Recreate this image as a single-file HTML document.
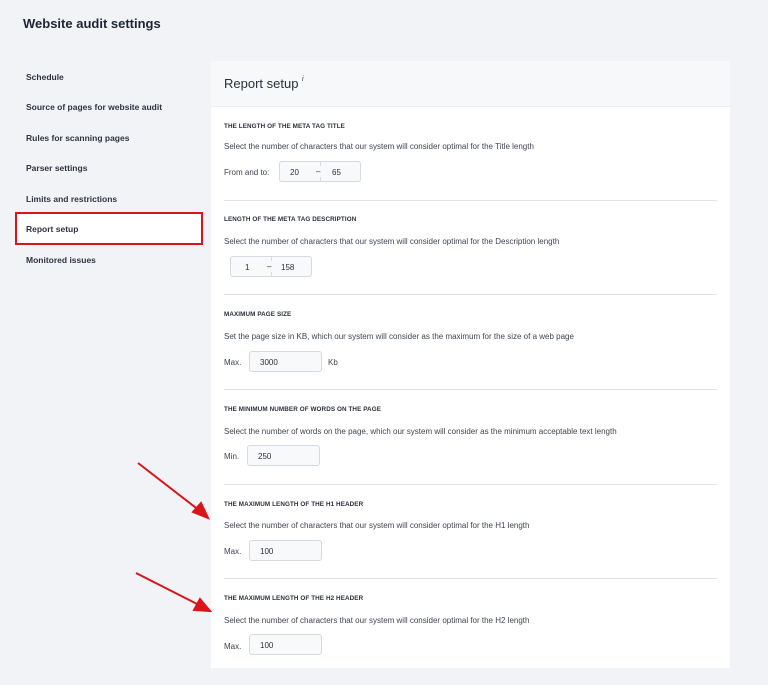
<!DOCTYPE html>
<html><head><meta charset="utf-8"><style>
*{box-sizing:border-box;margin:0;padding:0}
body{width:768px;height:685px;background:#f2f3f7;font-family:"Liberation Sans",sans-serif;color:#2b2f3a;position:relative;overflow:hidden}
.t{position:absolute;left:23px;top:16px;font-size:13px;font-weight:bold;color:#1f2430}
.nav{position:absolute;left:26px;font-size:8.5px;font-weight:bold;color:#2e3340}
.red{position:absolute;left:15px;top:212px;width:188px;height:33px;border:2px solid #d9141a;background:#fff}
.card{position:absolute;left:211px;top:61px;width:519px;height:607px;background:#fff}
.hd{height:46px;background:#f7f8fa;border-bottom:1px solid #eceef2;padding:15px 0 0 13px;font-size:13px;color:#2b2f3a}
.hd i{font-size:7px;vertical-align:top}
.s{position:absolute;left:13px;right:0}
.h{font-size:6.3px;font-weight:bold;letter-spacing:.1px;color:#2b2f3a}
.d{position:absolute;font-size:8px;color:#3f4550;white-space:nowrap}
.l{position:absolute;font-size:8px;color:#3f4550}
.in{position:absolute;height:21px;border:1px solid #d5d9e0;border-radius:3px;background:#f8f9fb;font-size:8px;color:#2b2f3a;padding:6px 0 0 10px}
.tick{position:absolute;left:40px;height:4px;border-left:1px solid #d5d9e0}
.line{position:absolute;left:0;width:493px;border-top:1px solid #dfe2e7}
</style></head><body>
<div class="t">Website audit settings</div>
<div class="red"></div>
<div class="nav" style="top:72px">Schedule</div>
<div class="nav" style="top:102px">Source of pages for website audit</div>
<div class="nav" style="top:133px">Rules for scanning pages</div>
<div class="nav" style="top:163px">Parser settings</div>
<div class="nav" style="top:194px">Limits and restrictions</div>
<div class="nav" style="top:224px">Report setup</div>
<div class="nav" style="top:255px">Monitored issues</div>
<div class="card">
<div class="hd">Report setup <i>i</i></div>
<div class="s" style="top:62px"><div class="h">THE LENGTH OF THE META TAG TITLE</div><div class="d" style="top:19px">Select the number of characters that our system will consider optimal for the Title length</div>
<div class="l" style="top:45px">From and to:</div>
<div class="in" style="left:55px;top:38px;width:82px">20<span class="tick" style="top:0"></span><span class="tick" style="bottom:0"></span><span style="position:absolute;left:36px;top:5px">–</span><span style="position:absolute;left:52px;top:6px">65</span></div>
<div class="line" style="top:77px"></div></div>
<div class="s" style="top:155px"><div class="h">LENGTH OF THE META TAG DESCRIPTION</div><div class="d" style="top:21px">Select the number of characters that our system will consider optimal for the Description length</div>
<div class="in" style="left:6px;top:40px;width:82px;padding-left:14px">1<span class="tick" style="top:0"></span><span class="tick" style="bottom:0"></span><span style="position:absolute;left:36px;top:5px">–</span><span style="position:absolute;left:50px;top:6px">158</span></div>
<div class="line" style="top:78px"></div></div>
<div class="s" style="top:250px"><div class="h">MAXIMUM PAGE SIZE</div><div class="d" style="top:21px">Set the page size in KB, which our system will consider as the maximum for the size of a web page</div>
<div class="l" style="top:47px">Max.</div><div class="in" style="left:25px;top:40px;width:73px">3000</div><div class="l" style="left:104px;top:47px">Kb</div>
<div class="line" style="top:78px"></div></div>
<div class="s" style="top:345px"><div class="h">THE MINIMUM NUMBER OF WORDS ON THE PAGE</div><div class="d" style="top:21px">Select the number of words on the page, which our system will consider as the minimum acceptable text length</div>
<div class="l" style="top:46px">Min.</div><div class="in" style="left:23px;top:39px;width:73px">250</div>
<div class="line" style="top:78px"></div></div>
<div class="s" style="top:440px"><div class="h">THE MAXIMUM LENGTH OF THE H1 HEADER</div><div class="d" style="top:20px">Select the number of characters that our system will consider optimal for the H1 length</div>
<div class="l" style="top:46px">Max.</div><div class="in" style="left:25px;top:39px;width:73px">100</div>
<div class="line" style="top:77px"></div></div>
<div class="s" style="top:534px"><div class="h">THE MAXIMUM LENGTH OF THE H2 HEADER</div><div class="d" style="top:21px">Select the number of characters that our system will consider optimal for the H2 length</div>
<div class="l" style="top:47px">Max.</div><div class="in" style="left:25px;top:39px;width:73px">100</div></div>
</div>
<svg style="position:absolute;left:0;top:0" width="768" height="685">
<g stroke="#d9141a" stroke-width="2" fill="#d9141a">
<line x1="138" y1="463" x2="200" y2="511"/><polygon points="208,518 193,512 201,503"/>
<line x1="136" y1="573" x2="201" y2="606"/><polygon points="210,611 194,610 200,599"/>
</g></svg>
</body></html>
